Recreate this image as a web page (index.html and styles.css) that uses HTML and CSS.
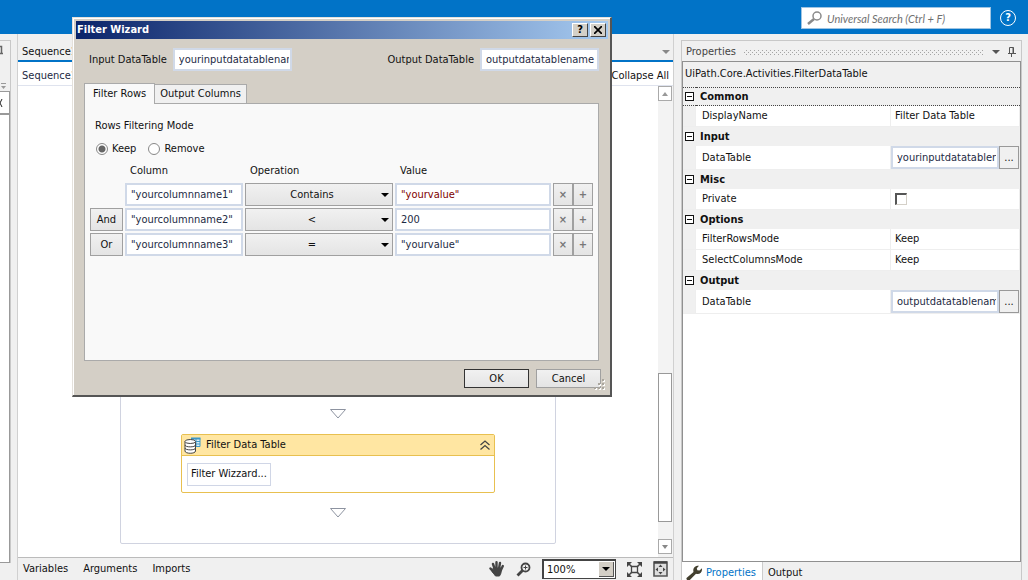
FILE: index.html
```html
<!DOCTYPE html>
<html lang="en">
<head>
    <meta charset="UTF-8">
    <meta name="viewport" content="width=device-width, initial-scale=1.0">
    <title>Filter Wizard</title>
    <link rel="stylesheet" href="styles.css">
</head>
<body>

    <header class="topbar">
        <label class="search">
            <svg width="16" height="14" viewBox="0 0 16 14" fill="none" stroke="#8a8a8a">
                <circle cx="10" cy="5" r="4" stroke-width="1.5"/>
                <path d="M7 8 L1 13" stroke-width="2.5"/>
            </svg>
            <input type="text" placeholder="Universal Search (Ctrl + F)" aria-label="Universal Search">
        </label>
        <button class="help" aria-label="Help">?</button>
    </header>

    <main class="workspace">
        <!-- Collapsed side panel -->
        <aside class="side-panel">
            <div class="side-head">
                <svg width="10" height="50" viewBox="0 0 10 50" fill="none" stroke="#666">
                    <path d="M0 5.5 H1.5 V12 M0 12.5 H3" stroke-width="1.5"/>
                    <path d="M1 42.5 H6" stroke="#999"/>
                    <path d="M1 45 H6 L3.5 48 Z" fill="#999" stroke="none"/>
                </svg>
            </div>
            <div class="side-search">
                <svg width="4" height="10" viewBox="0 0 4 10" fill="none" stroke="#222"><path d="M2 1 L0 5 L2 9"/></svg>
            </div>
            <div class="side-body"></div>
        </aside>

        <section class="designer">
            <div class="designer-tabs">
                <span>Sequence1</span>
                <span class="caret"></span>
            </div>
            <div class="breadcrumb">
                <a href="#">Sequence1</a>
                <button class="collapse-all">Collapse All</button>
            </div>
            <div class="canvas">
                <div class="canvas-view">
                    <div class="sequence">
                        <svg class="arrow" width="16" height="10" viewBox="0 0 16 10" fill="#fff" stroke="#8d93a0"><path d="M0.5 0.5 H15.5 L8 9 Z"/></svg>
                        <div class="activity">
                            <div class="activity-head">
                                <svg width="17" height="17" viewBox="0 0 17 17">
                                    <g fill="#d9effa" stroke="#3e97c6"><path d="M7.5 1.5 H16 V9.5 H7.5 Z M7 4.5 H16 M7 7 H16 M12 1 V9"/><path d="M7 1.5 H16.5" stroke-width="2"/></g>
                                    <path d="M1 4.5 V14 C1 17 11.5 17 11.5 14 V4.5" fill="#fff" stroke="#444"/>
                                    <ellipse cx="6.25" cy="4.5" rx="5.25" ry="2" fill="#fff" stroke="#444"/>
                                    <path d="M1 8 C1 10.5 11.5 10.5 11.5 8 M1 11 C1 13.5 11.5 13.5 11.5 11" fill="none" stroke="#444"/>
                                </svg>
                                <span>Filter Data Table</span>
                                <svg width="10" height="10" viewBox="0 0 10 10" fill="none" stroke="#444" stroke-width="1.3"><path d="M0.5 5 L5 1 L9.5 5 M0.5 9.5 L5 5.5 L9.5 9.5"/></svg>
                            </div>
                            <div class="activity-body">
                                <button>Filter Wizzard...</button>
                            </div>
                        </div>
                        <svg class="arrow" width="16" height="10" viewBox="0 0 16 10" fill="#fff" stroke="#8d93a0"><path d="M0.5 0.5 H15.5 L8 9 Z"/></svg>
                    </div>
                </div>
                <div class="scrollbar">
                    <button aria-label="Scroll up"><span class="tri-up"></span></button>
                    <div class="space-above"></div>
                    <div class="thumb"></div>
                    <div class="space-below"></div>
                    <button aria-label="Scroll down"><span class="tri-down"></span></button>
                </div>
            </div>
            <div class="statusbar">
                <button>Variables</button>
                <button>Arguments</button>
                <button>Imports</button>
                <div class="tools">
                    <button aria-label="Pan">
                        <svg width="16" height="16" viewBox="0 0 16 16" fill="none" stroke="#444" stroke-linecap="round">
                            <path d="M1.5 7.5 L4.5 11 M4 3 L6 9 M7.5 1.2 V9 M11 2 L9.8 9 M13.8 5 L11.5 10" stroke-width="2.4"/>
                            <path d="M4.5 7 H12 L12 12 L10.5 15 H6.5 L3.5 11 Z" fill="#444" stroke-width="1"/>
                        </svg>
                    </button>
                    <button aria-label="Zoom tool">
                        <svg width="15" height="15" viewBox="0 0 15 15" fill="none" stroke="#444">
                            <circle cx="9.5" cy="5.5" r="4" stroke-width="1.8"/>
                            <path d="M7.5 5.5 H11.5 M9.5 3.5 V7.5"/>
                            <path d="M6.5 8.5 L1.5 13.5" stroke-width="2.8"/>
                        </svg>
                    </button>
                    <span class="zoom">
                        <select aria-label="Zoom level"><option>100%</option></select>
                        <span class="zoom-arrow"><i class="tri-black"></i></span>
                    </span>
                    <button aria-label="Fit to screen">
                        <svg width="15" height="15" viewBox="0 0 15 15" fill="none" stroke="#444">
                            <path d="M4.5 4.5 H10.5 V10.5 H4.5 Z" stroke-width="1.3"/>
                            <path d="M4.5 4.5 L1 1 M10.5 4.5 L14 1 M10.5 10.5 L14 14 M4.5 10.5 L1 14" stroke-width="1.5"/>
                            <path d="M0 0 H5 L0 5 Z M15 0 V5 L10 0 Z M15 15 H10 L15 10 Z M0 15 V10 L5 15 Z" fill="#444" stroke="none"/>
                        </svg>
                    </button>
                    <button aria-label="Overview">
                        <svg width="15" height="16" viewBox="0 0 15 16" fill="none" stroke="#555">
                            <path d="M1 1 H14 V15 H1 Z" fill="#ddd" stroke-width="1.6"/>
                            <path d="M1 1.5 H14" stroke="#444" stroke-width="2.5"/>
                            <path d="M5.5 6 L7.5 3.5 L9.5 6 Z M5.5 11 L7.5 13.5 L9.5 11 Z M5 6.5 L2.5 8.5 L5 10.5 Z M10 6.5 L12.5 8.5 L10 10.5 Z" fill="#444" stroke="none"/>
                        </svg>
                    </button>
                </div>
            </div>
        </section>

        <aside class="properties">
            <div class="prop-head">
                <span>Properties</span>
                <span class="grip"></span>
                <span class="caret dark"></span>
                <svg width="8" height="11" viewBox="0 0 8 11" fill="none" stroke="#555"><path d="M1.5 6 V0.5 H5.5 V6 M5 0.5 V6 M0 6.5 H8 M3.5 7 V10"/></svg>
            </div>
            <div class="prop-box">
                <div class="prop-type">UiPath.Core.Activities.FilterDataTable</div>
                <table class="prop-grid">
                    <colgroup><col class="col-gutter"><col class="col-name"><col></colgroup>
                    <tbody>
                        <tr class="category focused"><th><button class="toggle" aria-label="Collapse Common"></button></th><th colspan="2">Common</th></tr>
                        <tr><td></td><td>DisplayName</td><td>Filter Data Table</td></tr>
                        <tr class="category"><th><button class="toggle" aria-label="Collapse Input"></button></th><th colspan="2">Input</th></tr>
                        <tr class="editor"><td></td><td><label for="in-table">DataTable</label></td><td><div class="edit"><input id="in-table" type="text" value="yourinputdatatablename"><button aria-label="Edit">...</button></div></td></tr>
                        <tr class="category"><th><button class="toggle" aria-label="Collapse Misc"></button></th><th colspan="2">Misc</th></tr>
                        <tr><td></td><td><label for="private">Private</label></td><td><input id="private" type="checkbox"></td></tr>
                        <tr class="category"><th><button class="toggle" aria-label="Collapse Options"></button></th><th colspan="2">Options</th></tr>
                        <tr><td></td><td>FilterRowsMode</td><td>Keep</td></tr>
                        <tr><td></td><td>SelectColumnsMode</td><td>Keep</td></tr>
                        <tr class="category"><th><button class="toggle" aria-label="Collapse Output"></button></th><th colspan="2">Output</th></tr>
                        <tr class="editor"><td></td><td><label for="out-table">DataTable</label></td><td><div class="edit"><input id="out-table" type="text" value="outputdatatablename"><button aria-label="Edit">...</button></div></td></tr>
                    </tbody>
                </table>
            </div>
            <div class="prop-tabs">
                <button class="active">
                    <svg width="17" height="16" viewBox="0 0 17 16">
                        <path d="M0.5 13 L7.500 7 C6.500 3.500 9 0.500 13 0.800 L10.800 3.200 L11.300 5.200 L13.500 5.500 L16 3.300 C16.500 7.500 13.500 9.800 10 8.800 L3.500 15.300 C1.500 16 0 14.500 0.500 13 Z" fill="#43402f"/>
                    </svg>
                    Properties
                </button>
                <button>Output</button>
            </div>
        </aside>
    </main>

    <!-- Filter wizard window -->
    <div class="dialog" role="dialog" aria-labelledby="dialog-title">
        <div class="titlebar">
            <h1 id="dialog-title">Filter Wizard</h1>
            <button aria-label="Help">?</button>
            <button aria-label="Close">
                <svg width="8" height="8" viewBox="0 0 8 8" stroke="#000" stroke-width="1.7"><path d="M0 0 L8 8 M8 0 L0 8"/></svg>
            </button>
        </div>
        <div class="dialog-body">
            <div class="tables">
                <label for="wiz-in">Input DataTable</label>
                <input id="wiz-in" type="text" value="yourinputdatatablename">
                <label class="push" for="wiz-out">Output DataTable</label>
                <input id="wiz-out" type="text" value="outputdatatablename">
            </div>

            <div class="tabs">
                <button class="active">Filter Rows</button>
                <button>Output Columns</button>
            </div>
            <div class="panel">
                <div class="mode-title">Rows Filtering Mode</div>
                <div class="modes">
                    <label><input type="radio" name="mode" checked> Keep</label>
                    <label><input type="radio" name="mode"> Remove</label>
                </div>
                <div class="filters">
                    <span></span>
                    <span class="filter-label">Column</span>
                    <span class="filter-label">Operation</span>
                    <span class="filter-label">Value</span>
                    <span></span>

                    <span></span>
                    <input type="text" aria-label="Column" value='"yourcolumnname1"'>
                    <span class="operation"><select aria-label="Operation"><option>Contains</option></select><i class="tri-black"></i></span>
                    <input class="literal" type="text" aria-label="Value" value='"yourvalue"'>
                    <span class="row-buttons"><button aria-label="Remove row">×</button><button aria-label="Add row">+</button></span>

                    <button>And</button>
                    <input type="text" aria-label="Column" value='"yourcolumnname2"'>
                    <span class="operation"><select aria-label="Operation"><option>&lt;</option></select><i class="tri-black"></i></span>
                    <input type="text" aria-label="Value" value="200">
                    <span class="row-buttons"><button aria-label="Remove row">×</button><button aria-label="Add row">+</button></span>

                    <button>Or</button>
                    <input type="text" aria-label="Column" value='"yourcolumnname3"'>
                    <span class="operation"><select aria-label="Operation"><option>=</option></select><i class="tri-black"></i></span>
                    <input type="text" aria-label="Value" value='"yourvalue"'>
                    <span class="row-buttons"><button aria-label="Remove row">×</button><button aria-label="Add row">+</button></span>
                </div>
            </div>

            <div class="dialog-actions">
                <button class="ok">OK</button>
                <button>Cancel</button>
            </div>
        </div>
        <svg class="resize" width="12" height="12" viewBox="0 0 12 12">
            <path d="M9 1h2v2h-2z M5 5h2v2h-2z M9 5h2v2h-2z M1 9h2v2h-2z M5 9h2v2h-2z M9 9h2v2h-2z" fill="#fff"/>
            <path d="M8 0h2v2h-2z M4 4h2v2h-2z M8 4h2v2h-2z M0 8h2v2h-2z M4 8h2v2h-2z M8 8h2v2h-2z" fill="#aaa69e"/>
        </svg>
    </div>

</body>
</html>
```
FILE: styles.css
```css
/* Global styles */
* {
    box-sizing: border-box;
}

body {
    font-family: 'DejaVu Sans Condensed', 'Noto Sans', sans-serif;
    font-size: 11px;
    line-height: 14px;
    color: #111;
    background-color: #f0f0f0;
    margin: 0;
    height: 100vh;
    display: flex;
    flex-direction: column;
    overflow: hidden;
}

button, input, select {
    font: inherit;
    color: inherit;
    margin: 0;
    border-radius: 0;
}

button {
    display: flex;
    align-items: center;
    justify-content: center;
    background: none;
    border: none;
    padding: 0;
    white-space: nowrap;
}

svg {
    display: block;
    flex: none;
}

input[type="text"] {
    min-width: 0;
    height: 23px;
    padding: 0 1px 0 4px;
    border: 2px solid #d0d9e8;
    background-color: #fff;
    color: #1d2a44;
}

select {
    appearance: none;
}

/* Small triangles */
.caret, .tri-down, .tri-up, .tri-black {
    flex: none;
    width: 0;
    height: 0;
    border: 4px solid transparent;
    border-bottom: 0;
    border-top-color: #888;
}

.caret.dark {
    border-top-color: #555;
}

.tri-up {
    border: 3px solid transparent;
    border-top: 0;
    border-bottom: 4px solid #999;
}

.tri-black {
    border-top-color: #000;
}

/* Top bar */
.topbar {
    flex: none;
    height: 34px;
    background-color: #0173c7;
    display: flex;
    align-items: center;
    justify-content: flex-end;
    gap: 9px;
    padding: 2px 12px 0 0;
}

.search {
    display: flex;
    align-items: center;
    width: 190px;
    height: 22px;
    padding-left: 5px;
    background-color: #fff;
    border: 1px solid #9fc4e2;
}

.search input[type="text"] {
    flex: 1;
    height: 20px;
    border: none;
    background: none;
    font-family: Lato, sans-serif;
    font-style: italic;
}

.search input::placeholder {
    color: #707070;
    opacity: 1;
}

.help {
    width: 16px;
    height: 16px;
    border: 1px solid #fff;
    border-radius: 50%;
    color: #fff;
    font-weight: bold;
}

/* Workspace */
.workspace {
    flex: 1;
    min-height: 0;
    display: flex;
}

.side-panel {
    width: 11px;
    margin: 6px 6px 17px 0;
    display: flex;
    flex-direction: column;
    border: solid #c8c8c8;
    border-width: 1px 1px 0 0;
}

.side-head {
    height: 50px;
}

.side-search {
    height: 24px;
    display: flex;
    align-items: center;
    background-color: #fff;
    border: solid #999;
    border-width: 1px 1px 2px 0;
}

.side-body {
    flex: 1;
    background-color: #fff;
    border: solid #999;
    border-width: 0 1px 1px 0;
}

/* Designer */
.designer {
    flex: 1;
    min-width: 0;
    display: flex;
    flex-direction: column;
    border: solid #d0d0d0;
    border-width: 0 1px;
}

.designer-tabs {
    height: 28px;
    display: flex;
    align-items: center;
    justify-content: space-between;
    padding: 10px 3px 0 4px;
    border-bottom: 2px solid #0173c7;
}

.breadcrumb {
    height: 24px;
    display: flex;
    align-items: center;
    justify-content: space-between;
    padding: 4px 4px 0;
    background-color: #fff;
    border-bottom: 1px solid #dfe3ee;
}

.breadcrumb a {
    color: #1d2a44;
    text-decoration: none;
}

.canvas {
    flex: 1;
    min-height: 0;
    display: flex;
    background-color: #fff;
}

.canvas-view {
    flex: 1;
    display: flex;
    justify-content: center;
    padding-bottom: 13px;
}

.sequence {
    width: 436px;
    display: flex;
    flex-direction: column;
    align-items: center;
    justify-content: flex-end;
    gap: 15px;
    padding-bottom: 25px;
    border: 1px solid #d0d3e0;
    border-radius: 2px;
}

.activity {
    width: 314px;
    border: 1px solid #e8c050;
    border-radius: 2px;
    background-color: #fff;
}

.activity-head {
    height: 21px;
    display: flex;
    align-items: center;
    gap: 5px;
    padding: 0 4px 0 2px;
    background-color: #ffe6a2;
    border-bottom: 1px solid #e8c050;
}

.activity-head span {
    flex: 1;
}

.activity-body {
    height: 36px;
    display: flex;
    align-items: center;
    padding-left: 5px;
}

.activity-body button {
    height: 23px;
    padding: 0 3px;
    border: 1px solid #d0d6e6;
}

.scrollbar {
    width: 15px;
    display: flex;
    flex-direction: column;
    background-color: #f3f3f3;
    padding: 0 1px 3px 0;
}

.scrollbar button {
    height: 15px;
    background-color: #fff;
    border: 1px solid #aaa;
}

.scrollbar .tri-down {
    border-width: 4px 3px 0;
}

.space-above {
    flex: 273;
}

.thumb {
    flex: 147;
    background-color: #fff;
    border: 1px solid #999;
}

.space-below {
    flex: 17;
}

.statusbar {
    height: 23px;
    display: flex;
    align-items: center;
    gap: 15px;
    padding: 0 5px;
    border-top: 1px solid #bbb;
}

.tools {
    margin-left: auto;
    display: flex;
    align-items: center;
    gap: 11px;
}

.zoom {
    display: flex;
    align-items: center;
    width: 74px;
    height: 20px;
    padding-right: 1px;
    background-color: #fff;
    border: solid #444;
    border-width: 2px 1px 1px 2px;
}

.zoom select {
    flex: 1;
    min-width: 0;
    border: none;
    background: none;
    padding: 0 3px;
}

.zoom-arrow {
    width: 15px;
    height: 15px;
    display: flex;
    align-items: center;
    justify-content: center;
    background-color: #d4cfc6;
    border: solid #555;
    border-width: 0 1px 1px 0;
    pointer-events: none;
}

/* Properties panel */
.properties {
    width: 341px;
    margin: 6px 6px 0 7px;
    display: flex;
    flex-direction: column;
    border: solid #c8c8c8;
    border-width: 1px 1px 0;
}

.prop-head {
    height: 20px;
    display: flex;
    align-items: center;
    gap: 8px;
    padding: 2px 5px 0 4px;
    color: #444;
}

.grip {
    flex: 1;
    height: 5px;
    background-image:
        linear-gradient(#a4a4a4, #a4a4a4),
        linear-gradient(#a4a4a4, #a4a4a4);
    background-size: 1px 1px;
    background-image: conic-gradient(#a4a4a4 25%, transparent 0 50%, #a4a4a4 0 75%, transparent 0);
    background-size: 4px 4px;
    -webkit-mask: conic-gradient(transparent 75%, #000 0) 0 0 / 2px 2px;
}

.prop-box {
    flex: 1;
    min-height: 0;
    background-color: #fff;
    border: 1px solid #909090;
}

.prop-type {
    height: 25px;
    padding: 5px 2px;
    background-color: #f0f0f0;
}

.prop-grid {
    width: 100%;
    table-layout: fixed;
    border-collapse: separate;
    border-spacing: 0;
}

.col-gutter {
    width: 13px;
}

.col-name {
    width: 195px;
}

.prop-grid td {
    height: 21px;
    padding: 0 4px;
    border: solid #eee;
    border-width: 0 1px 1px 0;
}

.prop-grid td:first-child {
    background-color: #f0f0f0;
    padding: 0;
}

.prop-grid td:nth-child(2) {
    padding-left: 6px;
}

.prop-grid th {
    height: 19px;
    padding: 0 0 0 4px;
    text-align: left;
    background-color: #f0f0f0;
}

.prop-grid th:first-child {
    padding-left: 2px;
}

.focused th {
    border: dotted #444;
    border-width: 1px 0;
}

.prop-grid .editor td {
    height: 24px;
}

.prop-grid .editor td:last-child {
    padding: 0;
}

.toggle {
    width: 9px;
    height: 9px;
    border: 1px solid #111;
    background: linear-gradient(#111, #111) center / 5px 1px no-repeat #fff;
}

.edit {
    display: flex;
}

.edit input[type="text"] {
    flex: 1;
}

.edit button {
    width: 20px;
    border: 1px solid #999;
    background-color: #f0f0f0;
}

.prop-grid input[type="checkbox"] {
    appearance: none;
    display: block;
    width: 12px;
    height: 12px;
    border: solid #555;
    border-width: 2px 1px 1px 2px;
    border-right-color: #d4d0c8;
    border-bottom-color: #d4d0c8;
    background-color: #fff;
}

.prop-tabs {
    height: 18px;
    display: flex;
}

.prop-tabs button {
    padding: 3px 5px 0;
    border-right: 1px solid #ccc;
}

.prop-tabs button:last-child {
    border: none;
}

.prop-tabs .active {
    gap: 3px;
    padding: 3px 6px 0 4px;
    color: #0173c7;
    background-color: #fff;
}

/* Dialog window */
.dialog {
    position: absolute;
    left: 72px;
    top: 17px;
    width: 540px;
    padding: 2px;
    background-color: #d4cfc6;
    border: solid #e4e1dc;
    border-width: 1px 2px 2px 1px;
    border-right-color: #555;
    border-bottom-color: #555;
    box-shadow: inset 1px 1px #fff;
}

.titlebar {
    display: flex;
    align-items: center;
    gap: 2px;
    height: 18px;
    margin: 1px 0 0 1px;
    padding: 0 2px 0 1px;
    background: linear-gradient(to right, #0a246a, #a6caf0);
}

.titlebar h1 {
    flex: 1;
    margin: 0;
    font-size: 11px;
    color: #fff;
}

.titlebar button {
    width: 16px;
    height: 14px;
    font-weight: bold;
    color: #000;
    background-color: #d4d0c8;
    border: 1px solid #fff;
    border-right-color: #444;
    border-bottom-color: #444;
}

.dialog-body {
    padding: 9px 7px 5px 9px;
}

.tables {
    display: flex;
    align-items: center;
    gap: 6px;
    padding-left: 5px;
    margin-right: 2px;
}

.tables input[type="text"] {
    width: 119px;
}

.push {
    margin-left: auto;
}

.tabs {
    display: flex;
    align-items: flex-end;
    margin-top: 12px;
}

.tabs button {
    height: 19px;
    padding: 0 5px;
    background-color: #f0f0f0;
    border: 1px solid #aaa;
    border-width: 1px 1px 0 0;
}

.tabs .active {
    height: 21px;
    margin-bottom: -1px;
    padding: 0 8px;
    background-color: #f9f9f9;
    border-left-width: 1px;
    z-index: 1;
}

.panel {
    height: 258px;
    margin-right: 2px;
    padding: 15px 5px;
    background-color: #f9f9f9;
    border: 1px solid #aaa;
}

.mode-title {
    padding-left: 5px;
}

.modes {
    display: flex;
    gap: 12px;
    padding: 9px 6px 8px;
}

.modes label {
    display: flex;
    align-items: center;
    gap: 4px;
}

.modes input {
    appearance: none;
    width: 12px;
    height: 12px;
    border: 1px solid #888;
    border-radius: 50%;
    background-color: #fff;
}

.modes input:checked {
    background: radial-gradient(#666 3px, #fff 4px);
}

.filters {
    display: grid;
    grid-template-columns: 33px 118px 148px 1fr 40px;
    gap: 2px;
}

.filters > button, .row-buttons button, .operation select, .dialog-actions button {
    background: linear-gradient(#f1f1f1, #e4e4e4);
    border: 1px solid #a0a0a0;
}

.filters .literal {
    color: #800000;
}

.filter-label {
    height: 17px;
    padding-left: 5px;
}

.operation {
    position: relative;
    display: flex;
}

.operation select {
    width: 100%;
    height: 23px;
    padding: 0 14px 0 0;
    text-align: center;
    text-align-last: center;
}

.operation .tri-black {
    position: absolute;
    right: 4px;
    top: 10px;
    pointer-events: none;
}

.row-buttons {
    display: flex;
}

.row-buttons button {
    width: 20px;
    color: #777;
    font-weight: bold;
}

.dialog-actions {
    display: flex;
    justify-content: flex-end;
    gap: 7px;
    padding-top: 8px;
}

.dialog-actions button {
    width: 65px;
    height: 19px;
}

.dialog-actions .ok {
    border-color: #333;
}

.resize {
    position: absolute;
    right: 4px;
    bottom: 4px;
}
```
